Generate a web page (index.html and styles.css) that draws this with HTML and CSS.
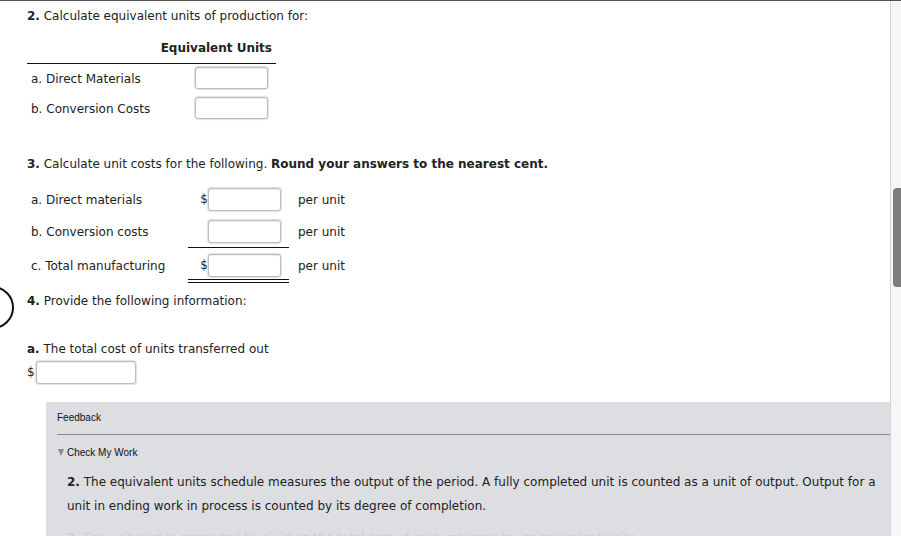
FILE: index.html
```html
<!DOCTYPE html>
<html>
<head>
<meta charset="utf-8">
<link rel="stylesheet" href="styles.css">
</head>
<body>
<div class="page">
  <main class="content">
    <p class="q q2"><b>2.</b> Calculate equivalent units of production for:</p>
    <div class="eu-table">
      <div class="eu-head">Equivalent Units</div>
      <div class="eu-row"><span class="eu-label">a. Direct Materials</span><span class="box eu-box"></span></div>
      <div class="eu-row"><span class="eu-label">b. Conversion Costs</span><span class="box eu-box"></span></div>
    </div>

    <p class="q q3"><b>3.</b> Calculate unit costs for the following. <b>Round your answers to the nearest cent.</b></p>
    <div class="uc-table">
      <div class="uc-row row-a">
        <span class="uc-label">a. Direct materials</span>
        <span class="uc-amt"><span class="dollar">$</span><span class="box uc-box"></span></span>
        <span class="uc-unit">per unit</span>
      </div>
      <div class="uc-row row-b">
        <span class="uc-label">b. Conversion costs</span>
        <span class="uc-amt single"><span class="box uc-box"></span></span>
        <span class="uc-unit">per unit</span>
      </div>
      <div class="uc-row row-c">
        <span class="uc-label">c. Total manufacturing</span>
        <span class="uc-amt double"><span class="dollar">$</span><span class="box uc-box"></span></span>
        <span class="uc-unit">per unit</span>
      </div>
    </div>

    <div class="q4wrap">
      <span class="ring"></span>
      <p class="q q4"><b>4.</b> Provide the following information:</p>
    </div>
    <p class="q qa"><b>a.</b> The total cost of units transferred out</p>
    <div class="ta-row"><span class="dollar">$</span><span class="box ta-box"></span></div>

    <section class="feedback">
      <div class="fb-title">Feedback</div>
      <div class="fb-check"><span class="tri"></span>Check My Work</div>
      <p class="fb-text"><b>2.</b> The equivalent units schedule measures the output of the period. A fully completed unit is counted as a unit of output. Output for a unit in ending work in process is counted by its degree of completion.</p>
      <p class="fb-text faded"><b>3.</b> The unit cost is computed by dividing the total cost of each category by its equivalent units.</p>
    </section>
  </main>
  <div class="scrollbar"><div class="thumb"></div></div>
</div>
</body>
</html>
```

FILE: styles.css
```css
html, body {
  margin: 0;
  padding: 0;
  background: #fff;
  overflow: hidden;
}
body {
  font-family: "DejaVu Sans", Verdana, sans-serif;
  font-size: 12px;
  color: #222;
  width: 901px;
  height: 536px;
}
.page {
  display: flex;
  height: 536px;
  border-top: 1px solid #555;
  box-sizing: border-box;
}
.content {
  width: 890px;
  flex: none;
  position: relative;
  overflow: hidden;
}
.scrollbar {
  flex: 1;
  border-left: 1px solid #d4d4d4;
  background: #f6f6f6;
}
.thumb {
  margin: 187px 0 0 2px;
  width: 8px;
  height: 99px;
  background: #7d7d7d;
  border-radius: 4px 0 0 4px;
}
.q {
  margin: 0;
  line-height: 16px;
  padding-left: 27px;
  padding-top: 1px;
}
.q2 { margin-top: 6px; }
.eu-table {
  margin: 15px 0 0 27px;
  width: 249px;
}
.eu-head {
  font-weight: bold;
  text-align: right;
  padding-right: 4px;
  line-height: 16px;
  padding-top: 1px;
  padding-bottom: 7px;
  border-bottom: 1px solid #111;
}
.eu-row {
  display: flex;
  align-items: flex-start;
  height: 30px;
  padding-top: 3px;
  box-sizing: border-box;
}
.eu-label {
  width: 168px;
  padding-left: 4px;
  padding-top: 1px;
  box-sizing: border-box;
  line-height: 22px;
}
.box {
  display: inline-block;
  height: 22px;
  box-sizing: border-box;
  border: 1px solid #bdbdbd;
  border-radius: 3px;
  box-shadow: 0 0 1px 1px #e2e2e2, inset 0 1px 1px #eee;
  background: #fff;
}
.eu-box { width: 73px; }
.q3 { margin-top: 31px; }
.uc-table {
  margin: 11px 0 0 27px;
}
.uc-row {
  display: flex;
  align-items: stretch;
}
.uc-row > span {
  display: flex;
  align-items: flex-start;
  line-height: 23px;
  box-sizing: border-box;
}
.row-a > span { height: 32px; padding-top: 5px; }
.row-b > span { height: 33px; padding-top: 5px; }
.row-c > span { height: 35px; padding-top: 6px; }
.uc-row > .uc-label, .uc-row > .uc-unit { padding-top: 6px; }
.row-c > .uc-label, .row-c > .uc-unit { padding-top: 7px; }
.uc-label {
  width: 161px;
  padding-left: 4px;
}
.uc-amt {
  width: 101px;
  justify-content: flex-end;
  padding-right: 8px;
}
.uc-amt.single { border-bottom: 1px solid #111; }
.uc-amt.double { border-bottom: 4px double #111; }
.uc-unit {
  padding-left: 9px;
}
.dollar {
  margin-right: 0;
}
.uc-box { width: 73px; height: 23px; }
.q4wrap {
  position: relative;
  margin-top: 9px;
}
.ring {
  position: absolute;
  left: -29px;
  top: -6px;
  width: 39px;
  height: 39px;
  border: 2.5px solid #111;
  border-radius: 50%;
}
.qa { margin-top: 31px; }
.ta-row {
  display: flex;
  align-items: center;
  padding-left: 27px;
  margin-top: 4px;
  line-height: 23px;
}
.ta-row .dollar { margin-right: 1px; }
.ta-box { width: 100px; height: 23px; }
.feedback {
  margin: 18px 0 0 46px;
  background: #dcdee2;
  padding: 10px 0 10px 11px;
  height: 200px;
}
.fb-title {
  font-family: "Liberation Sans", Arial, sans-serif;
  font-size: 10px;
  color: #111;
  line-height: 12px;
  padding-bottom: 10px;
  border-bottom: 1px solid #8a8a8d;
}
.fb-check {
  font-family: "Liberation Sans", Arial, sans-serif;
  font-size: 10px;
  color: #111;
  margin-top: 12px;
  line-height: 12px;
  display: flex;
  align-items: center;
}
.tri {
  display: inline-block;
  width: 0;
  height: 0;
  border-left: 3px solid transparent;
  border-right: 3px solid transparent;
  border-top: 7px solid #8a8a8a;
  margin: 0 3px 1px 1px;
}
.fb-text {
  margin: 10px 0 0 10px;
  line-height: 24px;
  padding-top: 1px;
  padding-right: 10px;
}
.fb-text.faded {
  margin-top: 7px;
  color: #cdcfd3;
}
```
